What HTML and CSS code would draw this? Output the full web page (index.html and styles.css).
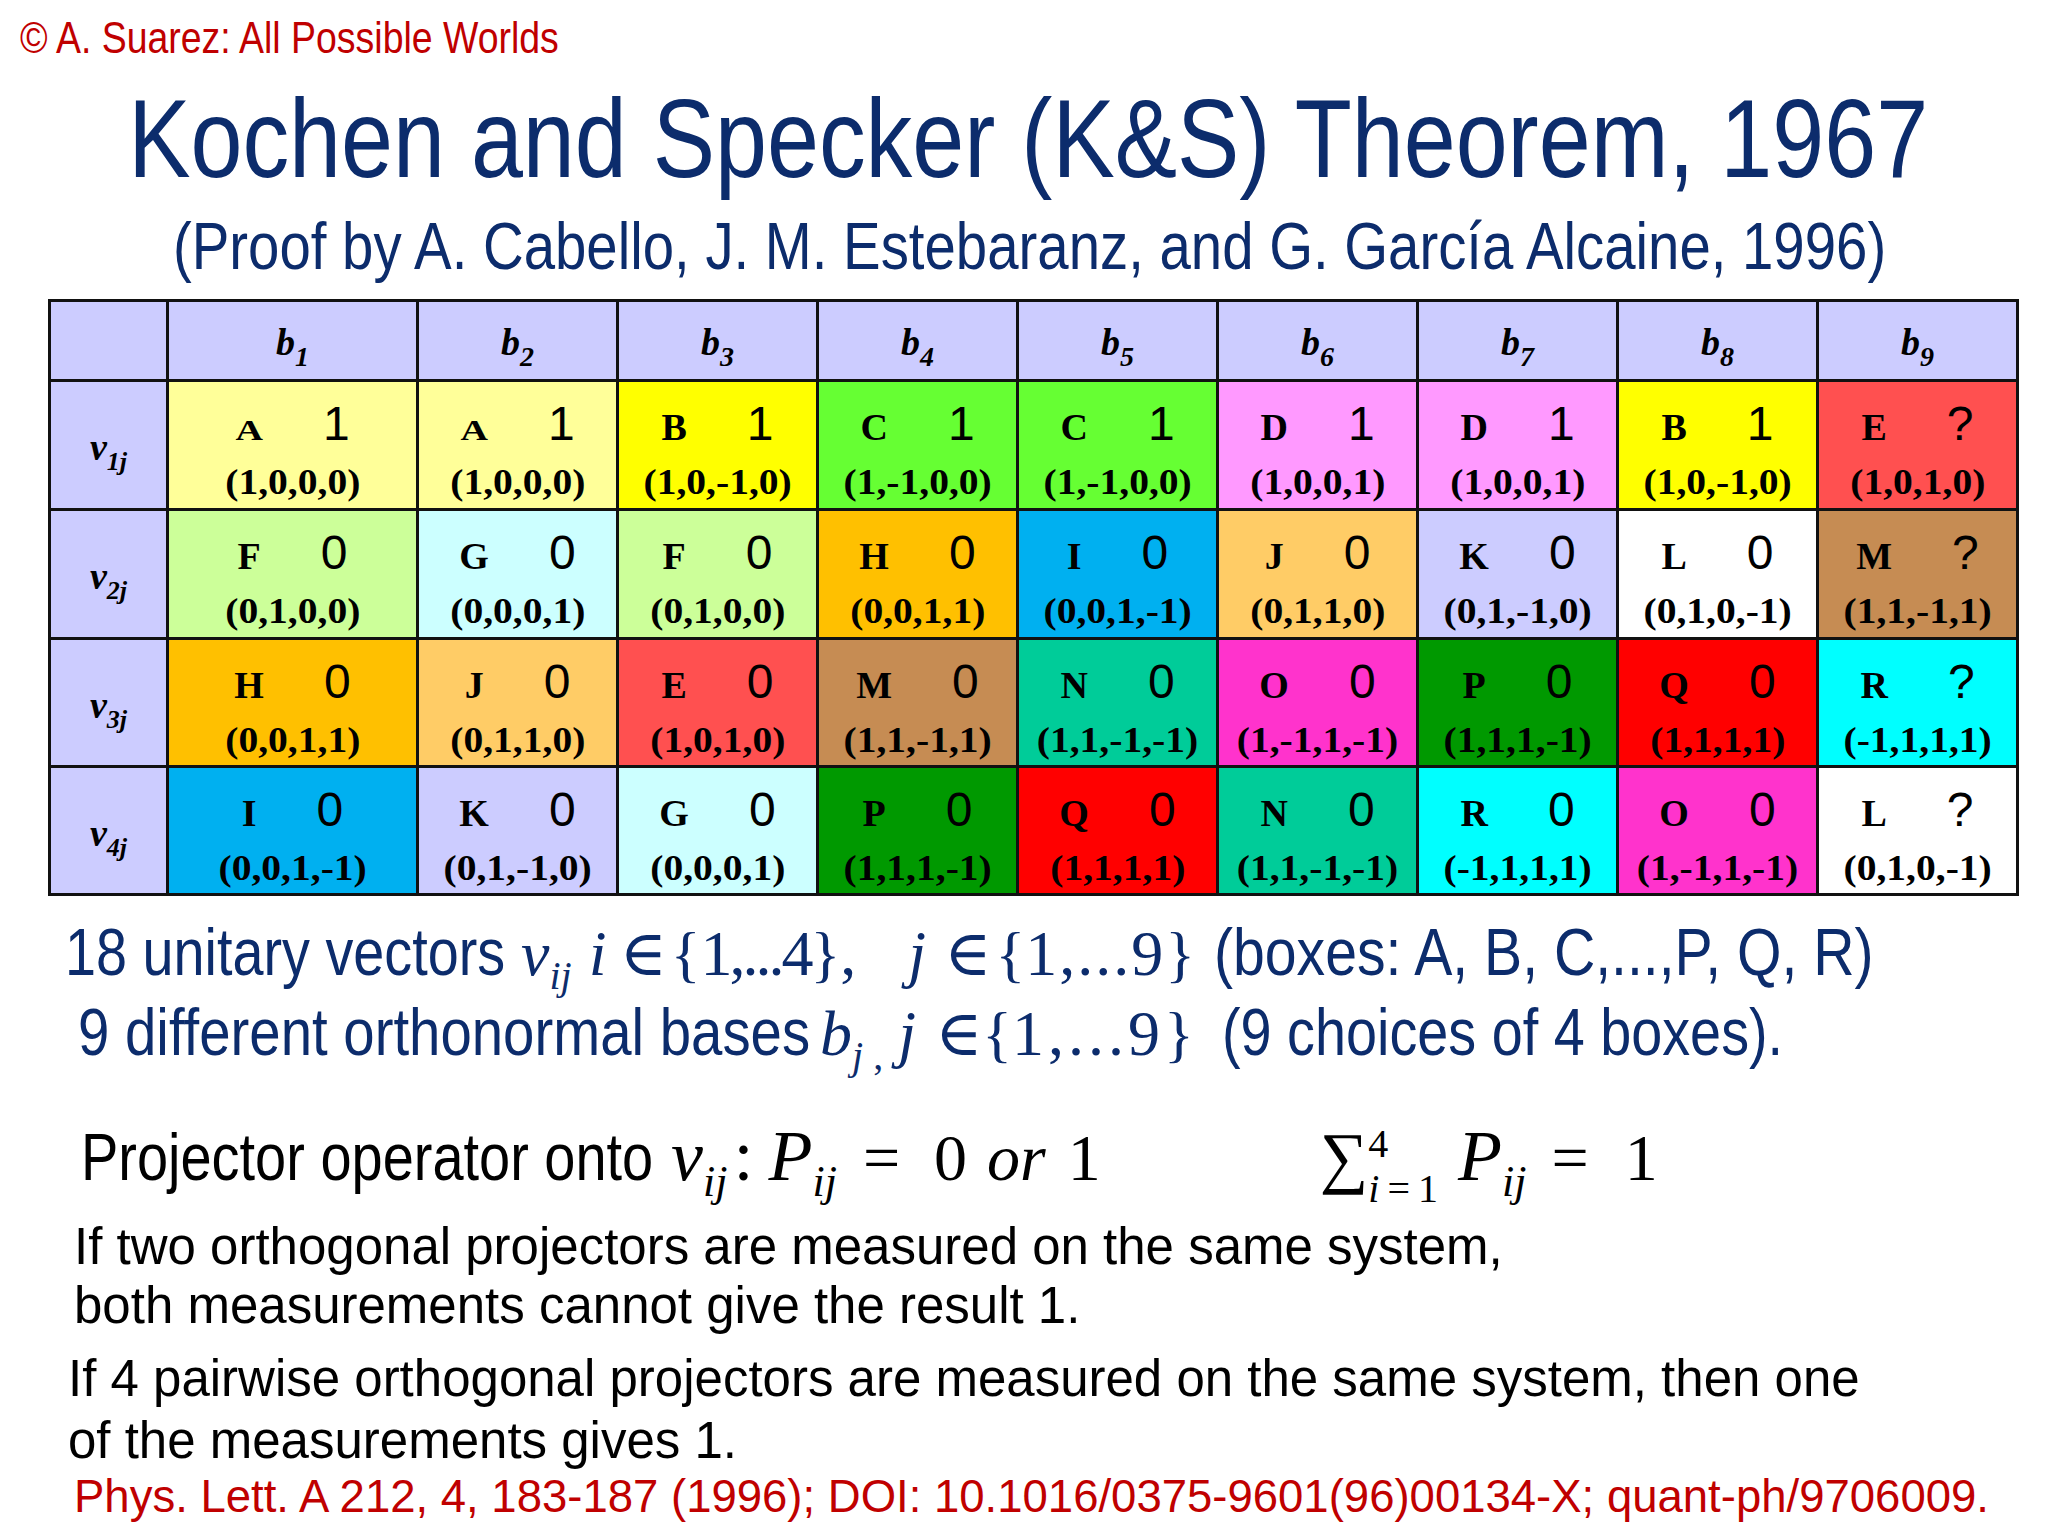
FILE: index.html
```html
<!DOCTYPE html>
<html lang="en">
<head>
<meta charset="utf-8">
<title>Kochen and Specker (K&amp;S) Theorem, 1967</title>
<link rel="stylesheet" href="styles.css">
</head>
<body>
<div class="slide">
  <p class="credit">© A. Suarez: All Possible Worlds</p>
  <div class="center-row title-row"><h1 class="title">Kochen and Specker (K&amp;S) Theorem, 1967</h1></div>
  <div class="center-row sub-row"><p class="subtitle">(Proof by A. Cabello, J. M. Estebaranz, and G. García Alcaine, 1996)</p></div>

  <div class="ks-table">
    <div class="corner"></div>
    <div class="hd"><span class="hb">b</span><span class="hs">1</span></div>
    <div class="hd"><span class="hb">b</span><span class="hs">2</span></div>
    <div class="hd"><span class="hb">b</span><span class="hs">3</span></div>
    <div class="hd"><span class="hb">b</span><span class="hs">4</span></div>
    <div class="hd"><span class="hb">b</span><span class="hs">5</span></div>
    <div class="hd"><span class="hb">b</span><span class="hs">6</span></div>
    <div class="hd"><span class="hb">b</span><span class="hs">7</span></div>
    <div class="hd"><span class="hb">b</span><span class="hs">8</span></div>
    <div class="hd"><span class="hb">b</span><span class="hs">9</span></div>

    <div class="lab"><span class="lv">v</span><span class="ls">1j</span></div>
    <div class="box bx-a"><div class="top"><span class="let let-a">A</span><span class="val">1</span></div><div class="vec"><span>(1,0,0,0)</span></div></div>
    <div class="box bx-a"><div class="top"><span class="let let-a">A</span><span class="val">1</span></div><div class="vec"><span>(1,0,0,0)</span></div></div>
    <div class="box bx-b"><div class="top"><span class="let">B</span><span class="val">1</span></div><div class="vec"><span>(1,0,-1,0)</span></div></div>
    <div class="box bx-c"><div class="top"><span class="let">C</span><span class="val">1</span></div><div class="vec"><span>(1,-1,0,0)</span></div></div>
    <div class="box bx-c"><div class="top"><span class="let">C</span><span class="val">1</span></div><div class="vec"><span>(1,-1,0,0)</span></div></div>
    <div class="box bx-d"><div class="top"><span class="let">D</span><span class="val">1</span></div><div class="vec"><span>(1,0,0,1)</span></div></div>
    <div class="box bx-d"><div class="top"><span class="let">D</span><span class="val">1</span></div><div class="vec"><span>(1,0,0,1)</span></div></div>
    <div class="box bx-b"><div class="top"><span class="let">B</span><span class="val">1</span></div><div class="vec"><span>(1,0,-1,0)</span></div></div>
    <div class="box bx-e"><div class="top"><span class="let">E</span><span class="val">?</span></div><div class="vec"><span>(1,0,1,0)</span></div></div>

    <div class="lab"><span class="lv">v</span><span class="ls">2j</span></div>
    <div class="box bx-f"><div class="top"><span class="let">F</span><span class="val">0</span></div><div class="vec"><span>(0,1,0,0)</span></div></div>
    <div class="box bx-g"><div class="top"><span class="let">G</span><span class="val">0</span></div><div class="vec"><span>(0,0,0,1)</span></div></div>
    <div class="box bx-f"><div class="top"><span class="let">F</span><span class="val">0</span></div><div class="vec"><span>(0,1,0,0)</span></div></div>
    <div class="box bx-h"><div class="top"><span class="let">H</span><span class="val">0</span></div><div class="vec"><span>(0,0,1,1)</span></div></div>
    <div class="box bx-i"><div class="top"><span class="let">I</span><span class="val">0</span></div><div class="vec"><span>(0,0,1,-1)</span></div></div>
    <div class="box bx-j"><div class="top"><span class="let">J</span><span class="val">0</span></div><div class="vec"><span>(0,1,1,0)</span></div></div>
    <div class="box bx-k"><div class="top"><span class="let">K</span><span class="val">0</span></div><div class="vec"><span>(0,1,-1,0)</span></div></div>
    <div class="box bx-l"><div class="top"><span class="let">L</span><span class="val">0</span></div><div class="vec"><span>(0,1,0,-1)</span></div></div>
    <div class="box bx-m"><div class="top"><span class="let">M</span><span class="val">?</span></div><div class="vec"><span>(1,1,-1,1)</span></div></div>

    <div class="lab"><span class="lv">v</span><span class="ls">3j</span></div>
    <div class="box bx-h"><div class="top"><span class="let">H</span><span class="val">0</span></div><div class="vec"><span>(0,0,1,1)</span></div></div>
    <div class="box bx-j"><div class="top"><span class="let">J</span><span class="val">0</span></div><div class="vec"><span>(0,1,1,0)</span></div></div>
    <div class="box bx-e"><div class="top"><span class="let">E</span><span class="val">0</span></div><div class="vec"><span>(1,0,1,0)</span></div></div>
    <div class="box bx-m"><div class="top"><span class="let">M</span><span class="val">0</span></div><div class="vec"><span>(1,1,-1,1)</span></div></div>
    <div class="box bx-n"><div class="top"><span class="let">N</span><span class="val">0</span></div><div class="vec"><span>(1,1,-1,-1)</span></div></div>
    <div class="box bx-o"><div class="top"><span class="let">O</span><span class="val">0</span></div><div class="vec"><span>(1,-1,1,-1)</span></div></div>
    <div class="box bx-p"><div class="top"><span class="let">P</span><span class="val">0</span></div><div class="vec"><span>(1,1,1,-1)</span></div></div>
    <div class="box bx-q"><div class="top"><span class="let">Q</span><span class="val">0</span></div><div class="vec"><span>(1,1,1,1)</span></div></div>
    <div class="box bx-r"><div class="top"><span class="let">R</span><span class="val">?</span></div><div class="vec"><span>(-1,1,1,1)</span></div></div>

    <div class="lab"><span class="lv">v</span><span class="ls">4j</span></div>
    <div class="box bx-i"><div class="top"><span class="let">I</span><span class="val">0</span></div><div class="vec"><span>(0,0,1,-1)</span></div></div>
    <div class="box bx-k"><div class="top"><span class="let">K</span><span class="val">0</span></div><div class="vec"><span>(0,1,-1,0)</span></div></div>
    <div class="box bx-g"><div class="top"><span class="let">G</span><span class="val">0</span></div><div class="vec"><span>(0,0,0,1)</span></div></div>
    <div class="box bx-p"><div class="top"><span class="let">P</span><span class="val">0</span></div><div class="vec"><span>(1,1,1,-1)</span></div></div>
    <div class="box bx-q"><div class="top"><span class="let">Q</span><span class="val">0</span></div><div class="vec"><span>(1,1,1,1)</span></div></div>
    <div class="box bx-n"><div class="top"><span class="let">N</span><span class="val">0</span></div><div class="vec"><span>(1,1,-1,-1)</span></div></div>
    <div class="box bx-r"><div class="top"><span class="let">R</span><span class="val">0</span></div><div class="vec"><span>(-1,1,1,1)</span></div></div>
    <div class="box bx-o"><div class="top"><span class="let">O</span><span class="val">0</span></div><div class="vec"><span>(1,-1,1,-1)</span></div></div>
    <div class="box bx-l"><div class="top"><span class="let">L</span><span class="val">?</span></div><div class="vec"><span>(0,1,0,-1)</span></div></div>
  </div>

  <p class="line l1"><span class="nw w1a"><span class="nx">18 unitary vectors</span></span><span class="m m1"><i>v</i><sub class="msub"><i>ij</i></sub><i class="sp1">i</i><span class="sp2">∈</span><span class="br">{</span><span class="dg0">1,...4</span><span class="br">}</span>,<i class="sp3">j</i><span class="sp2b">∈</span><span class="br">{</span><span class="dg1">1,...9</span><span class="br">}</span></span><span class="nw w1b"><span class="nx">(boxes: A, B, C,...,P, Q, R)</span></span></p>

  <p class="line l2"><span class="nw w2a"><span class="nx">9 different orthonormal bases</span></span><span class="m m2"><i>b</i><sub class="msub"><i>j</i> ,</sub><i class="sp4">j</i><span class="sp5">∈</span><span class="br">{</span><span class="dg2">1,...9</span><span class="br">}</span></span><span class="nw w2b"><span class="nx">(9 choices of 4 boxes).</span></span></p>

  <p class="line l3"><span class="nw w3"><span class="nx">Projector operator onto</span></span><span class="m m3"><i>v</i><sub class="msub3"><i>ij</i></sub><span class="colon">:</span><i class="pp">P</i><sub class="msub3"><i>ij</i></sub></span><span class="m m4"><span class="rel">=</span><span class="zero">0</span><i class="or">or</i><span class="one">1</span></span><span class="m sum"><span class="sig">∑</span><span class="lims"><span class="lim-up">4</span><span class="lim-dn"><i>i</i>=1</span></span><i class="pp">P</i><sub class="msub3"><i>ij</i></sub><span class="rel2">=</span><span class="one2">1</span></span></p>

  <p class="para p1">If two orthogonal projectors are measured on the same system,<br>both measurements cannot give the result 1.</p>
  <p class="para p2">If 4 pairwise orthogonal projectors are measured on the same system, then one<br>of the measurements gives 1.</p>
  <p class="ref">Phys. Lett. A 212, 4, 183-187 (1996); DOI: 10.1016/0375-9601(96)00134-X; quant-ph/9706009.</p>
</div>
</body>
</html>
```

FILE: styles.css
```css
html, body {
  margin: 0;
  padding: 0;
  background: #ffffff;
}

.slide {
  width: 2048px;
  height: 1536px;
  overflow: hidden;
  display: flex;
  flex-direction: column;
  align-items: flex-start;
  font-family: "Liberation Sans", Arial, sans-serif;
  background: #ffffff;
}

/* ---------- heading ---------- */
.credit {
  margin: 0 0 0 20px;
  padding-top: 8px;
  height: 60px;
  line-height: 60px;
  font-size: 45px;
  color: #c00000;
  white-space: nowrap;
  transform: scaleX(0.832);
  transform-origin: left center;
}

.center-row {
  align-self: stretch;
  display: flex;
  justify-content: center;
}

.title-row {
  margin-top: 11px;
  padding-left: 9px;
  height: 120px;
}

.title {
  flex: none;
  margin: 0;
  font-weight: normal;
  font-size: 112px;
  line-height: 120px;
  color: #0c2c6c;
  white-space: nowrap;
  transform: scaleX(0.834);
}

.sub-row {
  margin-top: 7px;
  padding-left: 12px;
  height: 80px;
}

.subtitle {
  flex: none;
  margin: 0;
  font-size: 67px;
  line-height: 80px;
  color: #0c2c6c;
  white-space: nowrap;
  transform: scaleX(0.841);
}

/* ---------- table ---------- */
.ks-table {
  margin: 13px 0 0 48px;
  display: grid;
  grid-template-columns: 115px 247px repeat(8, 197px);
  grid-template-rows: 77px 126px 126px 125px 125px;
  gap: 3px;
  padding: 3px;
  background: #111111;
}

.corner, .hd, .lab {
  background: #ccccff;
}

.hd, .lab {
  text-align: center;
  font-family: "Liberation Serif", "Times New Roman", serif;
  font-weight: bold;
  font-style: italic;
  color: #000;
}

.hd {
  padding-top: 10px;
  line-height: 60px;
  font-size: 38px;
}

.hs {
  font-size: 28px;
  line-height: 0;
  vertical-align: -11px;
}

.lab {
  padding-top: 40px;
  line-height: 50px;
  font-size: 38px;
}

.ls {
  font-size: 26px;
  line-height: 0;
  vertical-align: -10px;
}

.box {
  padding-top: 10px;
  text-align: center;
  color: #000;
}

.top {
  display: flex;
  justify-content: center;
  align-items: baseline;
  gap: 60px;
  height: 64px;
  line-height: 64px;
}

.let {
  font-family: "Liberation Serif", "Times New Roman", serif;
  font-weight: bold;
  font-size: 38px;
}

.let-a {
  display: inline-block;
  transform: scaleY(0.75);
  transform-origin: 50% 70%;
}

.val {
  font-family: "Liberation Sans", Arial, sans-serif;
  font-size: 48px;
}

.vec {
  margin-top: 4px;
  line-height: 46px;
  font-family: "Liberation Serif", "Times New Roman", serif;
  font-weight: bold;
  font-size: 35px;
}

.vec span {
  display: inline-block;
  transform: scaleX(1.13);
}

.bx-a { background: #ffff99; }
.bx-b { background: #ffff00; }
.bx-c { background: #66ff33; }
.bx-d { background: #ff99ff; }
.bx-e { background: #ff5050; }
.bx-f { background: #ccff99; }
.bx-g { background: #ccffff; }
.bx-h { background: #ffc000; }
.bx-i { background: #00b0f0; }
.bx-j { background: #ffcc66; }
.bx-k { background: #ccccff; }
.bx-l { background: #ffffff; }
.bx-m { background: #c68c53; }
.bx-n { background: #00cc99; }
.bx-o { background: #ff33cc; }
.bx-p { background: #009900; }
.bx-q { background: #ff0000; }
.bx-r { background: #00ffff; }

/* ---------- formula lines ---------- */
.line {
  margin: 0;
  white-space: nowrap;
}

/* narrow sans segments: a fixed-width slot holding horizontally condensed text */
.nw {
  display: inline-block;
  white-space: nowrap;
}

.nx {
  display: inline-block;
  transform: scaleX(0.845);
  transform-origin: left center;
}

.l1, .l2 {
  height: 80px;
  line-height: 80px;
  font-size: 66px;
  color: #0c2c6c;
}

.l1 { margin: 16px 0 0 65px; }
.l2 { margin: 0 0 0 78px; }

.w1a { width: 440px; }
.w1b { width: 670px; margin-left: 19px; }
.w1b .nx { transform: scaleX(0.866); }
.w2a { width: 734px; }
.w2a .nx { transform: scaleX(0.854); }
.w2b { width: 561px; margin-left: 28px; }

.m {
  font-family: "Liberation Serif", "DejaVu Serif", serif;
  font-size: 64px;
}

.m1 { margin-left: 16px; }
.m2 { margin-left: 8px; }

.msub {
  font-size: 40px;
  line-height: 0;
  vertical-align: -14px;
}

.sp1 { margin-left: 17px; }
.sp2 { margin: 0 4px 0 13px; }
.sp2b { margin: 0 4px 0 18px; }
.sp3 { margin-left: 52px; }
.sp4 { margin-left: 15px; }
.sp5 { margin: 0 0 0 19px; }
.br { font-size: 62px; }
.dg0 { letter-spacing: -3px; }
.dg1 { letter-spacing: 2px; }
.dg2 { letter-spacing: 4px; }

.l3 {
  margin: 39px 0 0 81px;
  height: 90px;
  line-height: 90px;
  font-size: 67px;
  color: #000;
}

.w3 { width: 572px; }
.w3 .nx { transform: scaleX(0.835); }

.m3 {
  margin-left: 18px;
  font-size: 72px;
}

.msub3 {
  font-size: 44px;
  line-height: 0;
  vertical-align: -16px;
}

.colon {
  margin: 0 0 0 6px;
  font-size: 72px;
}

.pp { margin-left: 15px; }

.m4 { font-size: 66px; }

.rel { margin-left: 26px; }
.zero { margin-left: 34px; }
.or { margin-left: 20px; }
.one { margin-left: 22px; }

.sum {
  margin-left: 219px;
  font-size: 66px;
}

.sig { font-size: 68px; }

.lims {
  display: inline-flex;
  flex-direction: column;
  vertical-align: 23px;
  line-height: 45px;
  font-size: 40px;
}

.lim-dn { letter-spacing: 8px; }

.sum .pp {
  margin-left: 12px;
  font-size: 72px;
}

.rel2 { margin: 0 36px 0 25px; }

/* ---------- paragraphs ---------- */
.para {
  font-size: 51px;
  color: #000;
  white-space: nowrap;
}

.p1 {
  margin: 16px 0 0 74px;
  line-height: 59px;
}

.p2 {
  margin: 13px 0 0 68px;
  line-height: 62px;
}

.ref {
  margin: 0 0 0 74px;
  font-size: 45.5px;
  line-height: 50px;
  color: #c00000;
  white-space: nowrap;
}
```
